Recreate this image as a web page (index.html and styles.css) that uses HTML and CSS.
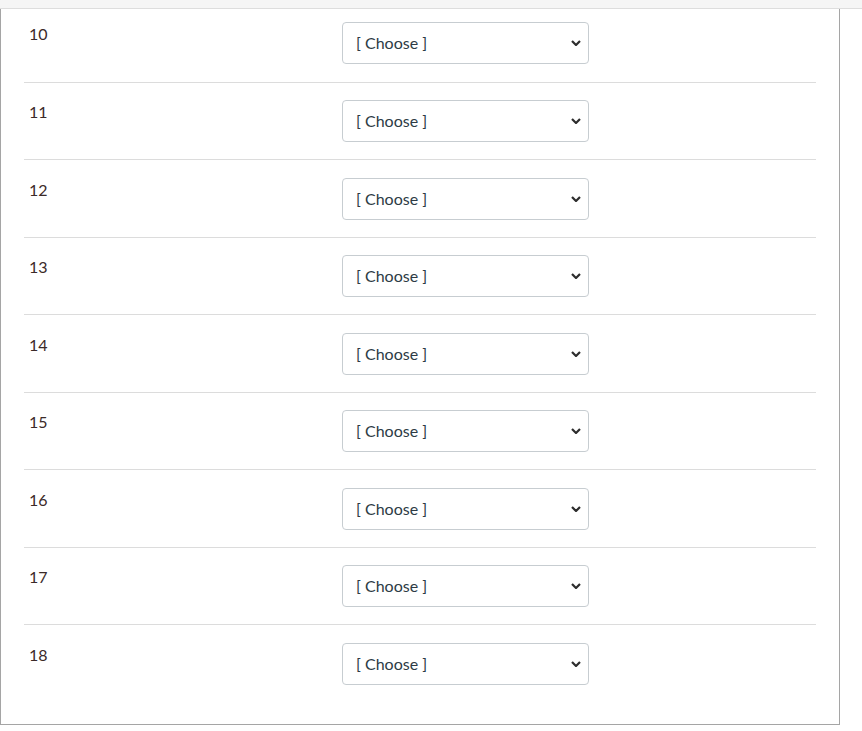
FILE: index.html
```html
<!DOCTYPE html>
<html lang="en">
<head>
<meta charset="utf-8">
<title>Matching</title>
<link rel="stylesheet" href="styles.css">
</head>
<body>
<div class="topband"></div>
<div class="panel">
  <div class="row first"><div class="label">10</div><div class="select"><span class="value">[ Choose ]</span><svg class="chev" viewBox="0 0 10 6" width="10" height="6"><path d="M1 1 L5 5 L9 1" fill="none" stroke="#2d2d2d" stroke-width="2.2"/></svg></div></div>
  <div class="row"><div class="label">11</div><div class="select"><span class="value">[ Choose ]</span><svg class="chev" viewBox="0 0 10 6" width="10" height="6"><path d="M1 1 L5 5 L9 1" fill="none" stroke="#2d2d2d" stroke-width="2.2"/></svg></div></div>
  <div class="row"><div class="label">12</div><div class="select"><span class="value">[ Choose ]</span><svg class="chev" viewBox="0 0 10 6" width="10" height="6"><path d="M1 1 L5 5 L9 1" fill="none" stroke="#2d2d2d" stroke-width="2.2"/></svg></div></div>
  <div class="row"><div class="label">13</div><div class="select"><span class="value">[ Choose ]</span><svg class="chev" viewBox="0 0 10 6" width="10" height="6"><path d="M1 1 L5 5 L9 1" fill="none" stroke="#2d2d2d" stroke-width="2.2"/></svg></div></div>
  <div class="row"><div class="label">14</div><div class="select"><span class="value">[ Choose ]</span><svg class="chev" viewBox="0 0 10 6" width="10" height="6"><path d="M1 1 L5 5 L9 1" fill="none" stroke="#2d2d2d" stroke-width="2.2"/></svg></div></div>
  <div class="row"><div class="label">15</div><div class="select"><span class="value">[ Choose ]</span><svg class="chev" viewBox="0 0 10 6" width="10" height="6"><path d="M1 1 L5 5 L9 1" fill="none" stroke="#2d2d2d" stroke-width="2.2"/></svg></div></div>
  <div class="row"><div class="label">16</div><div class="select"><span class="value">[ Choose ]</span><svg class="chev" viewBox="0 0 10 6" width="10" height="6"><path d="M1 1 L5 5 L9 1" fill="none" stroke="#2d2d2d" stroke-width="2.2"/></svg></div></div>
  <div class="row"><div class="label">17</div><div class="select"><span class="value">[ Choose ]</span><svg class="chev" viewBox="0 0 10 6" width="10" height="6"><path d="M1 1 L5 5 L9 1" fill="none" stroke="#2d2d2d" stroke-width="2.2"/></svg></div></div>
  <div class="row last"><div class="label">18</div><div class="select"><span class="value">[ Choose ]</span><svg class="chev" viewBox="0 0 10 6" width="10" height="6"><path d="M1 1 L5 5 L9 1" fill="none" stroke="#2d2d2d" stroke-width="2.2"/></svg></div></div>
</div>
</body>
</html>
```
FILE: styles.css
```css
html, body {
  margin: 0;
  padding: 0;
  background: #ffffff;
  font-family: Lato, "Liberation Sans", sans-serif;
  color: #2d3b45;
}
.topband {
  height: 8px;
  background: #f5f5f5;
  border-bottom: 1px solid #dddddd;
}
.panel {
  width: 840px;
  border-left: 1px solid #a5a5a5;
  border-right: 1px solid #a5a5a5;
  border-bottom: 1px solid #a5a5a5;
  padding: 0 23px 0 23px;
  box-sizing: border-box;
}
.row {
  display: flex;
  align-items: flex-start;
  padding: 17.5px 0 17px;
  border-bottom: 1px solid #dcdcdc;
}
.row.first {
  padding-top: 13px;
  padding-bottom: 17.5px;
}
.row.last {
  border-bottom: none;
  padding-bottom: 39px;
}
.label {
  width: 318px;
  padding-left: 5px;
  box-sizing: border-box;
  font-size: 16px;
  line-height: 24px;
  color: #3b2a28;
}
.select {
  width: 247px;
  height: 42px;
  box-sizing: border-box;
  border: 1px solid #c7cdd1;
  border-radius: 4px;
  display: flex;
  align-items: center;
  justify-content: space-between;
  padding: 0 7px 0 13px;
  font-size: 16px;
  color: #2d3b45;
  background: #fff;
}
.value {
  line-height: 20px;
}
.chev {
  display: block;
}
```
